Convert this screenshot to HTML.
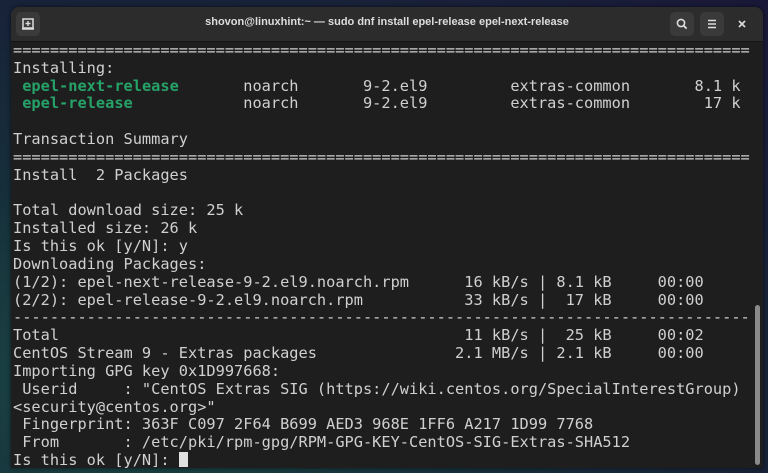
<!DOCTYPE html>
<html><head><meta charset="utf-8"><style>
html,body{margin:0;padding:0;width:768px;height:473px;overflow:hidden;background:#13252e;}
body{background:radial-gradient(ellipse at 20% 80%,#1b4a46 0%,#162e3a 40%,#1a1838 100%);}
.win{position:absolute;left:11px;top:7px;width:752px;height:461px;background:#1e1e1e;border-radius:8px 8px 0 0;overflow:hidden;box-shadow:0 0 4px rgba(0,0,0,.6);}
.tb{position:absolute;left:0;top:0;width:100%;height:34px;background:#2c2c2c;border-bottom:1px solid #151515;}
.btn{position:absolute;top:5px;width:24px;height:24px;background:#3a3a3a;border-radius:5px;}
.title{position:absolute;left:0;right:0;top:9px;text-align:center;font:bold 11px "Liberation Sans",sans-serif;color:#ddd;}
pre{position:absolute;left:2px;top:35px;margin:0;font-family:"DejaVu Sans Mono","Liberation Mono",monospace;font-size:15.3px;line-height:17.83px;color:#d0d0d0;}
.g{color:#26a269;font-weight:bold;}
.sb{position:absolute;left:744px;top:298px;width:5px;height:160px;background:#8a8a8a;border-radius:3px;}
.cur{display:inline-block;width:9px;height:15px;background:#e0e0e0;vertical-align:-2px;}
</style></head><body>
<div class="win">
<div class="tb">
<div class="btn" style="left:5px"><svg width="24" height="24"><rect x="7" y="7" width="10" height="9" fill="none" stroke="#ddd" stroke-width="1.5"/><line x1="6" y1="17" x2="18" y2="17" stroke="#ddd" stroke-width="1.5"/><path d="M12 9v5M9.5 11.5h5" stroke="#ddd" stroke-width="1.4"/></svg></div>
<div class="title">shovon@linuxhint:~ — sudo dnf install epel-release epel-next-release</div>
<div class="btn" style="left:659px"><svg width="24" height="24"><circle cx="11" cy="11" r="3.6" fill="none" stroke="#ddd" stroke-width="1.6"/><path d="M13.6 13.6l3 3" stroke="#ddd" stroke-width="1.8"/></svg></div>
<div class="btn" style="left:689px"><svg width="24" height="24"><path d="M8 8.5h8M8 12h8M8 15.5h8" stroke="#ddd" stroke-width="1.5"/></svg></div>
<svg style="position:absolute;left:725px;top:11px" width="12" height="12"><path d="M3 3l6 6M9 3l-6 6" stroke="#ddd" stroke-width="1.6"/></svg>
</div>
<pre>================================================================================
Installing:
 <span class="g">epel-next-release</span>       noarch       9-2.el9         extras-common       8.1 k
 <span class="g">epel-release</span>            noarch       9-2.el9         extras-common        17 k

Transaction Summary
================================================================================
Install  2 Packages

Total download size: 25 k
Installed size: 26 k
Is this ok [y/N]: y
Downloading Packages:
(1/2): epel-next-release-9-2.el9.noarch.rpm      16 kB/s | 8.1 kB     00:00
(2/2): epel-release-9-2.el9.noarch.rpm           33 kB/s |  17 kB     00:00
--------------------------------------------------------------------------------
Total                                            11 kB/s |  25 kB     00:02
CentOS Stream 9 - Extras packages               2.1 MB/s | 2.1 kB     00:00
Importing GPG key 0x1D997668:
 Userid     : "CentOS Extras SIG (https://wiki.centos.org/SpecialInterestGroup)
&lt;security@centos.org&gt;"
 Fingerprint: 363F C097 2F64 B699 AED3 968E 1FF6 A217 1D99 7768
 From       : /etc/pki/rpm-gpg/RPM-GPG-KEY-CentOS-SIG-Extras-SHA512
Is this ok [y/N]: <span class="cur"></span></pre>
<div class="sb"></div>
</div>
</body></html>
